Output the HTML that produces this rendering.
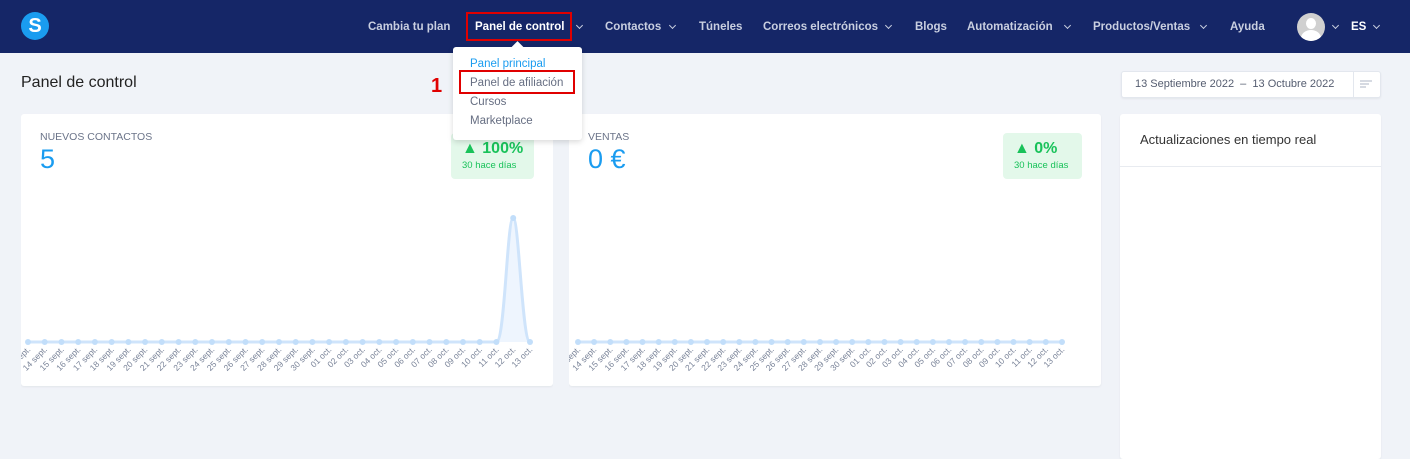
<!DOCTYPE html>
<html><head><meta charset="utf-8"><style>
*{box-sizing:border-box;margin:0;padding:0}
body{width:1410px;height:452px;overflow:hidden;background:#f0f3f8;font-family:"Liberation Sans",sans-serif;position:relative}
.hdr{position:absolute;left:0;top:0;width:1410px;height:53px;background:#152667}
.logo{position:absolute;left:21px;top:12px;width:28px;height:28px;border-radius:50%;background:#1a9cf0;color:#fff;font-weight:bold;font-size:20px;text-align:center;line-height:28px}
.nav{position:absolute;top:21px;font-size:11.5px;font-weight:bold;color:#c9cfe0;white-space:nowrap}
.chev{position:absolute;top:23px;width:5px;height:5px;border-right:1.5px solid #c9cfe0;border-bottom:1.5px solid #c9cfe0;transform:rotate(45deg)}
.box{position:absolute;border:2px solid #e00000}
.card{position:absolute;background:#fff;border-radius:3px;box-shadow:0 1px 2px rgba(0,0,0,.06)}
.lbl{font-size:10.5px;color:#6b7489;position:absolute}
.big{font-size:27px;color:#1a9cf0;position:absolute}
.badge{position:absolute;background:#e3f8ea;border-radius:4px;color:#19c25a}
.dd{position:absolute;left:453px;top:47px;width:129px;height:93px;background:#fff;border-radius:3px;box-shadow:0 2px 6px rgba(0,0,0,.15)}
.dd div{position:absolute;left:17px;font-size:11.5px;color:#666e82}
text{font-family:"Liberation Sans",sans-serif}
</style></head><body>
<div class="hdr">
<div class="logo">S</div>
<div class="nav" style="left:368px">Cambia tu plan</div>
<div class="nav" style="left:475px;color:#fff">Panel de control</div><span class="chev" style="left:577px"></span>
<div class="nav" style="left:605px">Contactos</div><span class="chev" style="left:670px"></span>
<div class="nav" style="left:699px">Túneles</div>
<div class="nav" style="left:763px">Correos electrónicos</div><span class="chev" style="left:886px"></span>
<div class="nav" style="left:915px">Blogs</div>
<div class="nav" style="left:967px">Automatización</div><span class="chev" style="left:1065px"></span>
<div class="nav" style="left:1093px">Productos/Ventas</div><span class="chev" style="left:1201px"></span>
<div class="nav" style="left:1230px">Ayuda</div>
<div style="position:absolute;left:1297px;top:13px;width:28px;height:28px;border-radius:50%;background:#d0d0d0;overflow:hidden"><div style="position:absolute;left:9px;top:5px;width:10px;height:11px;border-radius:50%;background:#fff"></div><div style="position:absolute;left:4px;top:17px;width:20px;height:16px;border-radius:50%;background:#fff"></div></div>
<span class="chev" style="left:1333px"></span>
<div class="nav" style="left:1351px;color:#fff">ES</div><span class="chev" style="left:1374px"></span>
</div>
<div class="box" style="left:466px;top:12px;width:106px;height:29px"></div>
<div style="position:absolute;left:21px;top:74px;font-size:16px;color:#222">Panel de control</div>
<div style="position:absolute;left:431px;top:75px;font-size:20px;font-weight:bold;color:#e00000">1</div>
<div class="card" style="left:1121px;top:71px;width:260px;height:27px;border:1px solid #e3e7ee;font-size:11px;color:#555d70;line-height:25px;padding-left:13px">13 Septiembre 2022 &nbsp;–&nbsp; 13 Octubre 2022<div style="position:absolute;left:231px;top:0;width:1px;height:25px;background:#e3e7ee"></div><div style="position:absolute;left:238px;top:8px;width:12px;height:1.5px;background:#d6dae2"></div><div style="position:absolute;left:238px;top:11px;width:9px;height:1.5px;background:#d6dae2"></div><div style="position:absolute;left:238px;top:14px;width:6px;height:1.5px;background:#d6dae2"></div></div>

<div class="card" style="left:21px;top:114px;width:532px;height:272px">
<div class="lbl" style="left:19px;top:17px">NUEVOS CONTACTOS</div>
<div class="big" style="left:19px;top:30px">5</div>
<div class="badge" style="left:430px;top:19px;width:83px;height:46px"><div style="position:absolute;left:11px;top:7px;font-size:16px;font-weight:bold">▲ 100%</div><div style="position:absolute;left:11px;top:27px;font-size:9.5px">30 hace días</div></div>
</div>
<div class="card" style="left:569px;top:114px;width:532px;height:272px">
<div class="lbl" style="left:19px;top:17px">VENTAS</div>
<div class="big" style="left:19px;top:30px">0 €</div>
<div class="badge" style="left:434px;top:19px;width:79px;height:46px"><div style="position:absolute;left:11px;top:7px;font-size:16px;font-weight:bold">▲ 0%</div><div style="position:absolute;left:11px;top:27px;font-size:9.5px">30 hace días</div></div>
</div>
<div class="card" style="left:1120px;top:114px;width:261px;height:345px">
<div style="position:absolute;left:20px;top:18px;font-size:13px;color:#333">Actualizaciones en tiempo real</div>
<div style="position:absolute;left:0;top:52px;width:261px;height:1px;background:#e8ebf0"></div>
</div>

<svg width="1410" height="452" style="position:absolute;left:0;top:0" font-size="8.5" fill="#7a8499">
<path d="M496.4 342 C505 342 507 218 513.2 218 C519 218 522 342 530 342 Z" fill="#eef5fe"/>
<path d="M28 342 L496.4 342 C505 342 507 218 513.2 218 C519 218 522 342 530 342" fill="none" stroke="#cfe4fb" stroke-width="3"/>
<path d="M578 342 L1062 342" stroke="#cfe4fb" stroke-width="3"/>
<g fill="#c2defa">
<circle cx="28" cy="342" r="3"/><circle cx="44.7" cy="342" r="3"/><circle cx="61.5" cy="342" r="3"/><circle cx="78.2" cy="342" r="3"/><circle cx="94.9" cy="342" r="3"/><circle cx="111.7" cy="342" r="3"/><circle cx="128.4" cy="342" r="3"/><circle cx="145.1" cy="342" r="3"/><circle cx="161.8" cy="342" r="3"/><circle cx="178.6" cy="342" r="3"/><circle cx="195.3" cy="342" r="3"/><circle cx="212" cy="342" r="3"/><circle cx="228.8" cy="342" r="3"/><circle cx="245.5" cy="342" r="3"/><circle cx="262.2" cy="342" r="3"/><circle cx="279" cy="342" r="3"/><circle cx="295.7" cy="342" r="3"/><circle cx="312.4" cy="342" r="3"/><circle cx="329.1" cy="342" r="3"/><circle cx="345.9" cy="342" r="3"/><circle cx="362.6" cy="342" r="3"/><circle cx="379.3" cy="342" r="3"/><circle cx="396.1" cy="342" r="3"/><circle cx="412.8" cy="342" r="3"/><circle cx="429.5" cy="342" r="3"/><circle cx="446.3" cy="342" r="3"/><circle cx="463" cy="342" r="3"/><circle cx="479.7" cy="342" r="3"/><circle cx="496.4" cy="342" r="3"/><circle cx="513.2" cy="218" r="3"/><circle cx="530" cy="342" r="3"/>
<circle cx="578" cy="342" r="3"/><circle cx="594.1" cy="342" r="3"/><circle cx="610.3" cy="342" r="3"/><circle cx="626.4" cy="342" r="3"/><circle cx="642.5" cy="342" r="3"/><circle cx="658.7" cy="342" r="3"/><circle cx="674.8" cy="342" r="3"/><circle cx="690.9" cy="342" r="3"/><circle cx="707" cy="342" r="3"/><circle cx="723.2" cy="342" r="3"/><circle cx="739.3" cy="342" r="3"/><circle cx="755.4" cy="342" r="3"/><circle cx="771.6" cy="342" r="3"/><circle cx="787.7" cy="342" r="3"/><circle cx="803.8" cy="342" r="3"/><circle cx="820" cy="342" r="3"/><circle cx="836.1" cy="342" r="3"/><circle cx="852.2" cy="342" r="3"/><circle cx="868.3" cy="342" r="3"/><circle cx="884.5" cy="342" r="3"/><circle cx="900.6" cy="342" r="3"/><circle cx="916.7" cy="342" r="3"/><circle cx="932.9" cy="342" r="3"/><circle cx="949" cy="342" r="3"/><circle cx="965.1" cy="342" r="3"/><circle cx="981.3" cy="342" r="3"/><circle cx="997.4" cy="342" r="3"/><circle cx="1013.5" cy="342" r="3"/><circle cx="1029.6" cy="342" r="3"/><circle cx="1045.8" cy="342" r="3"/><circle cx="1062" cy="342" r="3"/>
</g>
<g text-anchor="end">
<text transform="translate(31,350) rotate(-45)">13 sept.</text>
<text transform="translate(47.7,350) rotate(-45)">14 sept.</text>
<text transform="translate(64.5,350) rotate(-45)">15 sept.</text>
<text transform="translate(81.2,350) rotate(-45)">16 sept.</text>
<text transform="translate(97.9,350) rotate(-45)">17 sept.</text>
<text transform="translate(114.7,350) rotate(-45)">18 sept.</text>
<text transform="translate(131.4,350) rotate(-45)">19 sept.</text>
<text transform="translate(148.1,350) rotate(-45)">20 sept.</text>
<text transform="translate(164.8,350) rotate(-45)">21 sept.</text>
<text transform="translate(181.6,350) rotate(-45)">22 sept.</text>
<text transform="translate(198.3,350) rotate(-45)">23 sept.</text>
<text transform="translate(215,350) rotate(-45)">24 sept.</text>
<text transform="translate(231.8,350) rotate(-45)">25 sept.</text>
<text transform="translate(248.5,350) rotate(-45)">26 sept.</text>
<text transform="translate(265.2,350) rotate(-45)">27 sept.</text>
<text transform="translate(282,350) rotate(-45)">28 sept.</text>
<text transform="translate(298.7,350) rotate(-45)">29 sept.</text>
<text transform="translate(315.4,350) rotate(-45)">30 sept.</text>
<text transform="translate(332.1,350) rotate(-45)">01 oct.</text>
<text transform="translate(348.9,350) rotate(-45)">02 oct.</text>
<text transform="translate(365.6,350) rotate(-45)">03 oct.</text>
<text transform="translate(382.3,350) rotate(-45)">04 oct.</text>
<text transform="translate(399.1,350) rotate(-45)">05 oct.</text>
<text transform="translate(415.8,350) rotate(-45)">06 oct.</text>
<text transform="translate(432.5,350) rotate(-45)">07 oct.</text>
<text transform="translate(449.3,350) rotate(-45)">08 oct.</text>
<text transform="translate(466,350) rotate(-45)">09 oct.</text>
<text transform="translate(482.7,350) rotate(-45)">10 oct.</text>
<text transform="translate(499.4,350) rotate(-45)">11 oct.</text>
<text transform="translate(516.2,350) rotate(-45)">12 oct.</text>
<text transform="translate(533,350) rotate(-45)">13 oct.</text>
<text transform="translate(581,350) rotate(-45)">13 sept.</text>
<text transform="translate(597.1,350) rotate(-45)">14 sept.</text>
<text transform="translate(613.3,350) rotate(-45)">15 sept.</text>
<text transform="translate(629.4,350) rotate(-45)">16 sept.</text>
<text transform="translate(645.5,350) rotate(-45)">17 sept.</text>
<text transform="translate(661.7,350) rotate(-45)">18 sept.</text>
<text transform="translate(677.8,350) rotate(-45)">19 sept.</text>
<text transform="translate(693.9,350) rotate(-45)">20 sept.</text>
<text transform="translate(710,350) rotate(-45)">21 sept.</text>
<text transform="translate(726.2,350) rotate(-45)">22 sept.</text>
<text transform="translate(742.3,350) rotate(-45)">23 sept.</text>
<text transform="translate(758.4,350) rotate(-45)">24 sept.</text>
<text transform="translate(774.6,350) rotate(-45)">25 sept.</text>
<text transform="translate(790.7,350) rotate(-45)">26 sept.</text>
<text transform="translate(806.8,350) rotate(-45)">27 sept.</text>
<text transform="translate(823,350) rotate(-45)">28 sept.</text>
<text transform="translate(839.1,350) rotate(-45)">29 sept.</text>
<text transform="translate(855.2,350) rotate(-45)">30 sept.</text>
<text transform="translate(871.3,350) rotate(-45)">01 oct.</text>
<text transform="translate(887.5,350) rotate(-45)">02 oct.</text>
<text transform="translate(903.6,350) rotate(-45)">03 oct.</text>
<text transform="translate(919.7,350) rotate(-45)">04 oct.</text>
<text transform="translate(935.9,350) rotate(-45)">05 oct.</text>
<text transform="translate(952,350) rotate(-45)">06 oct.</text>
<text transform="translate(968.1,350) rotate(-45)">07 oct.</text>
<text transform="translate(984.3,350) rotate(-45)">08 oct.</text>
<text transform="translate(1000.4,350) rotate(-45)">09 oct.</text>
<text transform="translate(1016.5,350) rotate(-45)">10 oct.</text>
<text transform="translate(1032.6,350) rotate(-45)">11 oct.</text>
<text transform="translate(1048.8,350) rotate(-45)">12 oct.</text>
<text transform="translate(1065,350) rotate(-45)">13 oct.</text>
</g>
</svg>
<div style="position:absolute;left:0;top:114px;width:21px;height:280px;background:#f0f3f8"></div>
<div style="position:absolute;left:553px;top:114px;width:16px;height:280px;background:#f0f3f8"></div>

<div class="dd">
<div style="top:11px;color:#1a9cf0">Panel principal</div>
<div style="top:30px">Panel de afiliación</div>
<div style="top:49px">Cursos</div>
<div style="top:68px">Marketplace</div>
</div>
<div style="position:absolute;left:513px;top:43px;width:9px;height:9px;background:#fff;transform:rotate(45deg)"></div>
<div class="box" style="left:459px;top:70px;width:116px;height:24px"></div>
</body></html>
